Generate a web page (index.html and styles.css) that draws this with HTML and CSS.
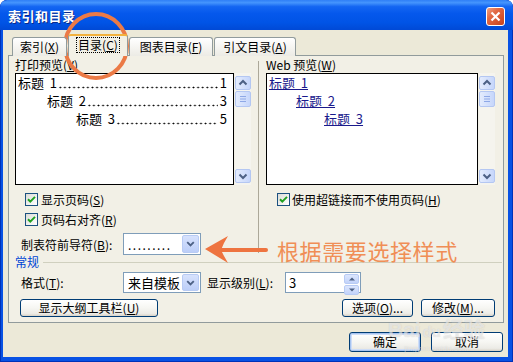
FILE: index.html
```html
<!DOCTYPE html>
<html lang="zh-CN">
<head>
    <meta charset="UTF-8">
    <title>索引和目录</title>
    <link rel="stylesheet" href="styles.css">
</head>
<body>
<div class="window">
    <div class="titlebar">
        <span class="title">索引和目录</span>
        <span class="close">
            <svg viewBox="0 0 17 17"><path d="M4.5 4.5 L12.5 12.5 M12.5 4.5 L4.5 12.5"/></svg>
        </span>
    </div>

    <div class="client">
        <div class="tabs">
            <div class="tab w1">索引(<u>X</u>)</div>
            <div class="tab w2 active"><span class="focus">目录(<u>C</u>)</span></div>
            <div class="tab w3">图表目录(<u>F</u>)</div>
            <div class="tab w4">引文目录(<u>A</u>)</div>
        </div>

        <div class="panel">
            <div class="cols">
                <div class="col">
                    <div class="label">打印预览(<u>V</u>)</div>
                    <div class="preview">
                        <div class="box">
                            <div class="toc"><span>标题&nbsp; 1</span><span class="dots"></span><span>1</span></div>
                            <div class="toc lv2"><span>标题&nbsp; 2</span><span class="dots"></span><span>3</span></div>
                            <div class="toc lv3"><span>标题&nbsp; 3</span><span class="dots"></span><span>5</span></div>
                        </div>
                        <div class="scrollbar">
                            <div class="sb-btn"><svg viewBox="0 0 14 14"><path d="M3.5 8.5 L7 5 L10.5 8.5"/></svg></div>
                            <div class="sb-thumb"><svg viewBox="0 0 14 14"><path d="M4 4.5 H10 M4 7 H10 M4 9.5 H10"/></svg></div>
                            <div class="sb-track"></div>
                            <div class="sb-btn"><svg viewBox="0 0 14 14"><path d="M3.5 5.5 L7 9 L10.5 5.5"/></svg></div>
                        </div>
                    </div>
                    <div class="check first">
                        <span class="cb"><svg viewBox="0 0 11 11"><path d="M2 5.3 L4.3 7.6 L9 2.9"/></svg></span>
                        <span>显示页码(<u>S</u>)</span>
                    </div>
                    <div class="check">
                        <span class="cb"><svg viewBox="0 0 11 11"><path d="M2 5.3 L4.3 7.6 L9 2.9"/></svg></span>
                        <span>页码右对齐(<u>R</u>)</span>
                    </div>
                    <div class="field leader">
                        <span class="field-label">制表符前导符(<u>B</u>):</span>
                        <div class="combo">
                            <span class="combo-text">.........</span>
                            <span class="combo-btn"><svg viewBox="0 0 16 16"><path d="M4.5 6 L8 9.5 L11.5 6"/></svg></span>
                        </div>
                    </div>
                </div>

                <div class="sep"></div>

                <div class="col">
                    <div class="label">Web 预览(<u>W</u>)</div>
                    <div class="preview">
                        <div class="box web">
                            <div class="link">标题&nbsp; 1</div>
                            <div class="link lv2">标题&nbsp; 2</div>
                            <div class="link lv3">标题&nbsp; 3</div>
                        </div>
                        <div class="scrollbar">
                            <div class="sb-btn"><svg viewBox="0 0 14 14"><path d="M3.5 8.5 L7 5 L10.5 8.5"/></svg></div>
                            <div class="sb-thumb"><svg viewBox="0 0 14 14"><path d="M4 4.5 H10 M4 7 H10 M4 9.5 H10"/></svg></div>
                            <div class="sb-track"></div>
                            <div class="sb-btn"><svg viewBox="0 0 14 14"><path d="M3.5 5.5 L7 9 L10.5 5.5"/></svg></div>
                        </div>
                    </div>
                    <div class="check first right">
                        <span class="cb"><svg viewBox="0 0 11 11"><path d="M2 5.3 L4.3 7.6 L9 2.9"/></svg></span>
                        <span>使用超链接而不使用页码(<u>H</u>)</span>
                    </div>
                </div>
            </div>

            <div class="group">
                <span class="group-title">常规</span>
                <span class="group-line"></span>
            </div>

            <div class="field format">
                <span class="field-label">格式(<u>T</u>):</span>
                <div class="combo">
                    <span class="combo-text">来自模板</span>
                    <span class="combo-btn"><svg viewBox="0 0 16 16"><path d="M4.5 6 L8 9.5 L11.5 6"/></svg></span>
                </div>
                <span class="level-label">显示级别(<u>L</u>):</span>
                <div class="spin">
                    <span class="spin-text">3</span>
                    <span class="spin-btns">
                        <span class="spin-btn"><svg viewBox="0 0 12 8"><path d="M3 5.5 L6 2.5 L9 5.5 Z"/></svg></span>
                        <span class="spin-btn"><svg viewBox="0 0 12 8"><path d="M3 2.5 L6 5.5 L9 2.5 Z"/></svg></span>
                    </span>
                </div>
            </div>

            <div class="actions">
                <button class="btn outline">显示大纲工具栏(<u>U</u>)</button>
                <button class="btn options">选项(<u>O</u>)...</button>
                <button class="btn modify">修改(<u>M</u>)...</button>
            </div>
        </div>

        <div class="footer">
            <button class="btn dialog default">确定</button>
            <button class="btn dialog">取消</button>
        </div>
    </div>

    <!-- annotations drawn over the screenshot -->
    <svg class="annot" viewBox="0 0 513 362">
        <ellipse cx="96" cy="46" rx="31" ry="32"/>
        <path class="shaft" d="M219 250 H266"/>
        <path class="head" d="M205 249 L228 236 L224 243 L221 250 L224 256 L228 263 Z"/>
    </svg>
    <div class="annot-text">根据需要选择样式</div>

    <div class="watermark">
        <span class="wm-big">Bai<span class="paw">du</span>经验</span>
        <span class="wm-small">jingyan.baidu.com</span>
    </div>
</div>
</body>
</html>
```

FILE: styles.css
```css
* {
    box-sizing: border-box;
}
body {
    margin: 0;
    font-family: "Noto Sans CJK SC", "DejaVu Sans", sans-serif;
    font-size: 12px;
    color: #000;
    background: #fff;
}
u {
    text-decoration: underline;
}

/* window frame */
.window {
    position: relative;
    width: 513px;
    height: 362px;
    display: flex;
    flex-direction: column;
    background: #0852E4;
    border-radius: 7px 7px 0 0;
    box-shadow: inset 0 0 0 1px #0032B8;
    overflow: hidden;
}
.titlebar {
    height: 30px;
    flex: none;
    display: flex;
    align-items: center;
    justify-content: space-between;
    padding: 0 8px 0 8px;
    border-radius: 7px 7px 0 0;
    background: linear-gradient(180deg, #2F7FF6 0%, #4595FD 9%, #1466F2 22%, #0558EC 45%, #0054E6 75%, #0049D6 100%);
}
.title {
    color: #fff;
    font-size: 13px;
    font-weight: bold;
    letter-spacing: 0.5px;
    text-shadow: 1px 1px 0 #0B2A8A;
}
.close {
    width: 19px;
    height: 19px;
    border: 1px solid #fff;
    border-radius: 3px;
    background: linear-gradient(135deg, #EFA183 0%, #E26A45 35%, #D5532D 70%, #C0421E 100%);
    display: flex;
    align-items: center;
    justify-content: center;
    margin-top: 2px;
}
.close svg {
    width: 17px;
    height: 17px;
    fill: none;
    stroke: #fff;
    stroke-width: 2.2;
}

.client {
    flex: 1;
    margin: 0 5px 5px 3px;
    background: #ECE9D8;
    padding: 5px 4px 0 5px;
    display: flex;
    flex-direction: column;
}

/* tabs */
.tabs {
    display: flex;
    align-items: flex-end;
    height: 21px;
    padding-left: 4px;
    margin-bottom: -1px;
    position: relative;
    z-index: 1;
}
.tab {
    height: 19px;
    margin-right: 1px;
    border: 1px solid #919B9C;
    border-bottom: none;
    border-radius: 3px 3px 0 0;
    background: linear-gradient(#FFFFFF, #F4F3EF 60%, #ECEBE5);
    display: flex;
    align-items: center;
    justify-content: center;
    line-height: 14px;
}
.tab.w1 { width: 55px; }
.tab.w2 { width: 60px; }
.tab.w3 { width: 84px; }
.tab.w4 { width: 82px; }
.tab.active {
    height: 22px;
    background: #F2F0E6;
    border-top: 2px solid #F3B23D;
    padding-bottom: 2px;
}
.focus {
    outline: 1px dotted #000;
    outline-offset: 0;
    padding: 0 1px;
}

/* tab page */
.panel {
    height: 268px;
    border: 1px solid #919B9C;
    background: #F2F0E6;
    padding: 2px 8px 0 6px;
}
.cols {
    display: grid;
    grid-template-columns: 236px 1px 229px;
    column-gap: 7px;
}
.col {
    display: flex;
    flex-direction: column;
}
.label {
    height: 14px;
    line-height: 14px;
}
.preview {
    display: flex;
    height: 112px;
    margin-top: 1px;
}
.box {
    flex: 1;
    border: 1px solid #000;
    background: #fff;
    padding: 0 6px 0 2px;
    overflow: hidden;
}
.toc {
    display: flex;
    height: 18px;
    line-height: 18px;
    font-size: 13px;
    white-space: nowrap;
}
.toc.lv2 { padding-left: 29px; }
.toc.lv3 { padding-left: 58px; }
.dots {
    flex: 1;
    margin: 0 2px 0 1px;
    background-image: radial-gradient(circle, #000 0.75px, transparent 1.1px);
    background-size: 4.6px 3px;
    background-repeat: repeat-x;
    background-position: 0 12px;
}
.box.web {
    padding-left: 2px;
}
.link {
    height: 18px;
    line-height: 18px;
    font-size: 13px;
    color: #1A1A8C;
    text-decoration: underline;
    white-space: nowrap;
}
.link.lv2 { padding-left: 27px; }
.link.lv3 { padding-left: 55px; }

.scrollbar {
    width: 16px;
    margin-left: 1px;
    display: flex;
    flex-direction: column;
    padding: 3px 0 2px;
    background: #F5F4EE;
}
.sb-btn,
.sb-thumb {
    height: 14px;
    flex: none;
    border: 1px solid #B4C7F2;
    border-radius: 2px;
    background: linear-gradient(90deg, #E4ECFD, #C6D6FB);
    display: flex;
    align-items: center;
    justify-content: center;
}
.sb-thumb {
    height: 16px;
    margin-top: 1px;
}
.sb-btn svg,
.sb-thumb svg {
    width: 14px;
    height: 14px;
    fill: none;
}
.sb-btn svg {
    stroke: #4D6185;
    stroke-width: 2;
}
.sb-thumb svg {
    stroke: #8EA8E6;
    stroke-width: 1;
}
.sb-track {
    flex: 1;
}

.check {
    height: 20px;
    display: flex;
    align-items: center;
    padding-left: 10px;
}
.check.first {
    margin-top: 4px;
}
.check.right {
    padding-left: 11px;
}
.cb {
    width: 13px;
    height: 13px;
    flex: none;
    margin-right: 3px;
    border: 1px solid #1C5180;
    background: linear-gradient(135deg, #DCDCD7, #FFFFFF);
}
.check.right .cb {
    margin-right: 2px;
}
.cb svg {
    display: block;
    width: 11px;
    height: 11px;
    fill: none;
    stroke: #21A121;
    stroke-width: 2;
}

.field {
    display: flex;
    align-items: center;
    height: 22px;
}
.field.leader {
    margin-top: 4px;
}
.field-label {
    width: 108px;
    padding-left: 6px;
    flex: none;
}
.combo {
    width: 78px;
    height: 100%;
    border: 1px solid #7F9DB9;
    background: #fff;
    display: flex;
    align-items: stretch;
    padding: 1px;
}
.combo-text {
    flex: 1;
    padding-left: 3px;
    display: flex;
    align-items: center;
    letter-spacing: 1.5px;
}
.format .combo-text {
    font-size: 13px;
    letter-spacing: 0;
}
.combo-btn {
    width: 17px;
    border: 1px solid #B8CBF4;
    border-radius: 2px;
    background: linear-gradient(180deg, #D7E2FD, #BCCEF8);
    display: flex;
    align-items: center;
    justify-content: center;
}
.combo-btn svg {
    width: 16px;
    height: 16px;
    fill: none;
    stroke: #4D6185;
    stroke-width: 2;
}

.sep {
    background: #ACA899;
    margin: 3px 0 2px;
}

.group {
    display: flex;
    align-items: center;
    height: 14px;
    line-height: 14px;
    margin-right: -7px;
}
.group-title {
    color: #0046D5;
}
.group-line {
    flex: 1;
    height: 1px;
    margin-left: 4px;
    background: #D0D0BF;
}

.field.format {
    margin-top: 3px;
    height: 21px;
}
.level-label {
    width: 78px;
    margin-left: 6px;
    flex: none;
}
.spin {
    width: 76px;
    height: 100%;
    border: 1px solid #7F9DB9;
    background: #fff;
    display: flex;
    padding: 1px;
}
.spin-text {
    flex: 1;
    padding-left: 2px;
    display: flex;
    align-items: center;
    font-size: 13px;
}
.spin-btns {
    width: 15px;
    display: flex;
    flex-direction: column;
    gap: 1px;
}
.spin-btn {
    flex: 1;
    border: 1px solid #B8CBF4;
    border-radius: 2px;
    background: linear-gradient(180deg, #DCE6FD, #C2D3FA);
    display: flex;
    align-items: center;
    justify-content: center;
}
.spin-btn svg {
    width: 12px;
    height: 8px;
    fill: #4D6185;
}

/* buttons */
.actions {
    display: flex;
    margin-top: 6px;
    height: 18px;
}
.btn {
    font-family: inherit;
    font-size: 12px;
    color: #000;
    padding: 0;
    border: 1px solid #003C74;
    border-radius: 3px;
    background: linear-gradient(180deg, #FFFFFF 0%, #F6F6F2 50%, #ECEBE6 85%, #D8D2C6 100%);
    line-height: 14px;
}
.btn.outline {
    width: 138px;
    margin-left: 5px;
}
.btn.options {
    width: 71px;
    margin-left: auto;
}
.btn.modify {
    width: 74px;
    margin-left: 8px;
}

.footer {
    display: flex;
    justify-content: flex-end;
    gap: 10px;
    margin-top: 9px;
    padding-right: 1px;
}
.btn.dialog {
    width: 72px;
    height: 20px;
}
.btn.default {
    box-shadow: inset 0 0 0 1px #A6C3F0, inset 0 0 0 2px #CEDDF7;
}

/* orange annotations */
.annot {
    position: absolute;
    left: 0;
    top: 0;
    width: 513px;
    height: 362px;
    pointer-events: none;
}
.annot ellipse {
    fill: none;
    stroke: #EB7A46;
    stroke-width: 4;
}
.annot .shaft {
    fill: none;
    stroke: #EE7440;
    stroke-width: 4;
    stroke-linecap: round;
}
.annot .head {
    fill: #EE7440;
}
.annot-text {
    position: absolute;
    left: 277px;
    top: 236px;
    font-size: 22px;
    line-height: 28px;
    letter-spacing: 0.6px;
    color: #F08E56;
    white-space: nowrap;
}

.watermark {
    position: absolute;
    left: 388px;
    top: 318px;
    display: flex;
    flex-direction: column;
    align-items: center;
    pointer-events: none;
}
.wm-big {
    font-family: "Liberation Sans", "Noto Sans CJK SC", sans-serif;
    font-size: 21px;
    font-weight: bold;
    line-height: 24px;
    color: rgba(255, 255, 255, 0.55);
    text-shadow: 0 0 1px rgba(120, 120, 120, 0.35);
}
.paw {
    font-size: 15px;
    margin: 0 2px;
}
.wm-small {
    font-family: "Liberation Sans", sans-serif;
    font-size: 8px;
    line-height: 9px;
    color: rgba(255, 255, 255, 0.5);
    text-shadow: 0 0 1px rgba(120, 120, 120, 0.3);
}
```
